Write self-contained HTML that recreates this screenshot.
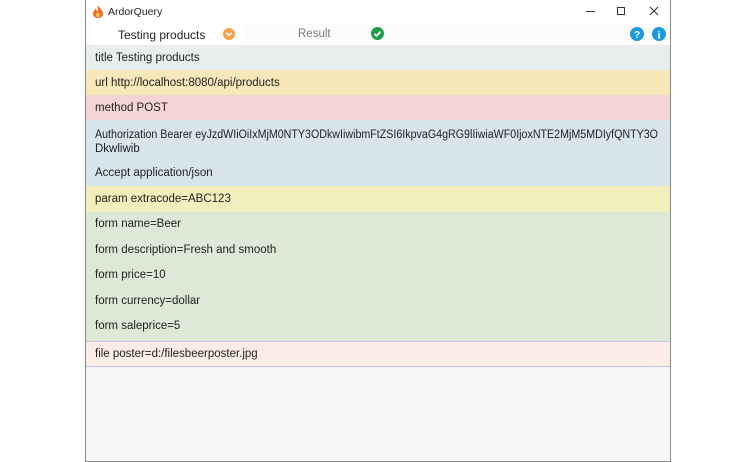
<!DOCTYPE html>
<html><head><meta charset="utf-8"><style>
*{margin:0;padding:0;box-sizing:border-box}
body{width:756px;height:462px;background:#fff;font-family:"Liberation Sans",sans-serif;font-size:11.5px;color:#222;position:relative;overflow:hidden}
#win{position:absolute;left:85px;top:0;width:586px;height:462px;border:1px solid #8a8a8a;border-top:none;background:#f6f6f6}
#tb{height:24px;background:#fff;position:relative}
#tb .t{position:absolute;left:22px;top:6px;font-size:10.5px;color:#222}
#tabs{height:21px;background:#fdfcfd;position:relative}
.row{position:absolute;left:0;width:584px;padding-left:9px;line-height:26px;white-space:nowrap}
</style></head><body>
<div id="win">
<div id="tb">
<svg style="position:absolute;left:7px;top:5px" width="10" height="13" viewBox="0 0 10 13"><path d="M5 0C6 3 10 5 10 9a5 4 0 0 1-10 0C0 6 2 5 3 3c0 2 1 3 2 3C5 4 4 2 5 0z" fill="#f26a2a"/><path d="M5 7c1 1 2 2 2 3a2 2 0 0 1-4 0c0-1 1-2 2-3z" fill="#fbc04a"/></svg>
<span class="t">ArdorQuery</span>
<div style="position:absolute;left:500px;top:11px;width:9px;height:1px;background:#333"></div>
<div style="position:absolute;left:531px;top:7px;width:8px;height:8px;border:1px solid #333"></div>
<svg style="position:absolute;left:563px;top:6px" width="10" height="10"><path d="M1 1L9 9M9 1L1 9" stroke="#333" stroke-width="1.1"/></svg>
</div>
<div id="tabs">
<div style="position:absolute;left:6px;top:0;width:150px;height:21px;background:#fff"></div>
<span style="position:absolute;left:32px;top:4px;font-size:12px">Testing products</span>
<svg style="position:absolute;left:137px;top:4px" width="12" height="12"><circle cx="6" cy="6" r="6" fill="#f4a24a"/><path d="M3.3 4.8L6 7.5L8.7 4.8" stroke="#fff" stroke-width="1.6" fill="none"/></svg>
<span style="position:absolute;left:212px;top:4px;color:#777">Result</span>
<svg style="position:absolute;left:285px;top:3px" width="13" height="13"><circle cx="6.5" cy="6.5" r="6.5" fill="#1e9e4a"/><path d="M3.5 6.8L5.6 8.8L9.5 4.6" stroke="#fff" stroke-width="1.8" fill="none"/></svg>
<svg style="position:absolute;left:544px;top:3px" width="14" height="14"><circle cx="7" cy="7" r="7" fill="#1a9ae0"/><text x="7" y="11" text-anchor="middle" font-family="Liberation Sans" font-weight="bold" font-size="10" fill="#fff">?</text></svg>
<svg style="position:absolute;left:566px;top:3px" width="14" height="14"><circle cx="7" cy="7" r="7" fill="#1a9ae0"/><text x="7" y="11.5" text-anchor="middle" font-family="Liberation Serif" font-weight="bold" font-size="11" fill="#fff">i</text></svg>
</div>
<div class="row" style="top:45px;height:25px;background:#e7eeeb">title Testing products</div>
<div class="row" style="top:70px;height:25px;background:#f6e8b8">url http://localhost:8080/api/products</div>
<div class="row" style="top:95px;height:25px;background:#f5d5d4">method POST</div>
<div class="row" style="top:120px;height:40px;background:#d9e5ed;padding:0">
<svg width="584" height="40" style="position:absolute;left:0;top:0"><text x="9" y="18" textLength="563" lengthAdjust="spacingAndGlyphs" font-family="Liberation Sans" font-size="11.5" fill="#222">Authorization Bearer eyJzdWIiOiIxMjM0NTY3ODkwIiwibmFtZSI6IkpvaG4gRG9lIiwiaWF0IjoxNTE2MjM5MDIyfQNTY3O</text><text x="9" y="32" font-family="Liberation Sans" font-size="11.5" fill="#222">Dkwliwib</text></svg>
</div>
<div class="row" style="top:160px;height:26px;background:#d9e5ed">Accept application/json</div>
<div class="row" style="top:186px;height:26px;background:#f2efbd">param extracode=ABC123</div>
<div class="row" style="top:212px;height:129px;background:#dde8d6;line-height:25.6px;white-space:normal">form name=Beer<br>form description=Fresh and smooth<br>form price=10<br>form currency=dollar<br>form saleprice=5</div>
<div class="row" style="top:341px;height:26px;background:#fbede5;border-top:1px solid #c8c4e6;border-bottom:1px solid #c8c4e6;line-height:24px">file poster=d:/filesbeerposter.jpg</div>
</div>
</body></html>
